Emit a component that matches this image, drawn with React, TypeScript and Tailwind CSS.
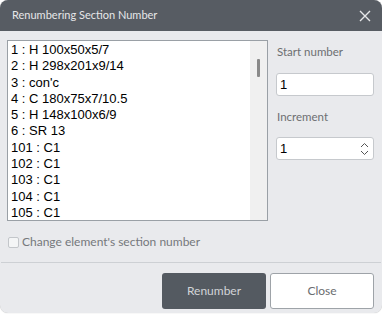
import React from "react";

const items = [
  "1 : H 100x50x5/7",
  "2 : H 298x201x9/14",
  "3 : con'c",
  "4 : C 180x75x7/10.5",
  "5 : H 148x100x6/9",
  "6 : SR 13",
  "101 : C1",
  "102 : C1",
  "103 : C1",
  "104 : C1",
  "105 : C1",
];

export default function App() {
  return (
    <div className="w-[382px] h-[317px] bg-white">
      <div
        className="w-[382px] h-[313px] rounded-[8px] overflow-hidden bg-[#e9eaed] flex flex-col shadow-[0_0_1px_rgba(0,0,0,0.3)]"
        style={{ fontFamily: 'Lato, "Noto Sans", sans-serif' }}
      >
        <div className="h-[31px] bg-[#575c63] flex items-center justify-between pl-[12px] pr-[9px] shrink-0">
          <span className="text-[11px] text-[#e6e7e9]">Renumbering Section Number</span>
          <svg width="12" height="12" viewBox="0 0 12 12" className="mr-[2px]">
            <path d="M1 1 L11 11 M11 1 L1 11" stroke="#e6e7e9" strokeWidth="1.4" />
          </svg>
        </div>
        <div className="flex pt-[9px] pl-[7px] pr-[8px]">
          <div className="w-[261px] h-[181px] bg-white border border-[#9aa0a6] flex">
            <div
              className="flex-1 pl-[3px] pt-[1px] text-[13px] text-black leading-[16.3px]"
              style={{ fontFamily: '"Liberation Sans", Arial, sans-serif' }}
            >
              {items.map((t) => (
                <div key={t}>{t}</div>
              ))}
            </div>
            <div className="w-[17px] bg-[#f0f0f0] flex justify-center pt-[18px]">
              <div className="w-[3px] h-[18px] bg-[#8a8a8a] rounded-[1px]" />
            </div>
          </div>
          <div className="flex flex-col ml-[8px] w-[98px]">
            <div className="text-[11.5px] text-[#6d6f72] mt-[4px] ml-[1px] leading-[16px]">Start number</div>
            <div className="mt-[13px] h-[23px] bg-white border border-[#c6c9cd] rounded-[3px] flex items-center pl-[3px] text-[13px] text-black" style={{ fontFamily: '"Liberation Sans", Arial, sans-serif' }}>1</div>
            <div className="text-[11.5px] text-[#6d6f72] mt-[13px] ml-[1px] leading-[16px]">Increment</div>
            <div className="mt-[12px] h-[23px] bg-white border border-[#c6c9cd] rounded-[3px] flex items-center justify-between pl-[3px] pr-[4px] text-[13px] text-black" style={{ fontFamily: '"Liberation Sans", Arial, sans-serif' }}>
              <span>1</span>
              <svg width="9" height="16" viewBox="0 0 9 16">
                <path d="M1 6 L4.5 2.5 L8 6" fill="none" stroke="#555" strokeWidth="1" />
                <path d="M1 10 L4.5 13.5 L8 10" fill="none" stroke="#555" strokeWidth="1" />
              </svg>
            </div>
          </div>
        </div>
        <div className="flex items-center mt-[14px] pl-[8px]">
          <div className="w-[11px] h-[11px] border border-[#c3c6ca] rounded-[2px] bg-[#f4f5f6]" />
          <span className="ml-[3px] text-[12px] text-[#75787c] leading-[14px]">Change element's section number</span>
        </div>
        <div className="mt-[13px] mx-[1px] h-px bg-[#cdd0d4]" />
        <div className="flex justify-end gap-[4px] pr-[8px] mt-[10px]">
          <button className="w-[104px] h-[36px] rounded-[3px] bg-[#545a61] text-[12px] text-[#d2d4d7]">Renumber</button>
          <button className="w-[104px] h-[36px] rounded-[3px] bg-white border border-[#9ea3a8] text-[12px] text-[#6a6d70]">Close</button>
        </div>
      </div>
    </div>
  );
}
